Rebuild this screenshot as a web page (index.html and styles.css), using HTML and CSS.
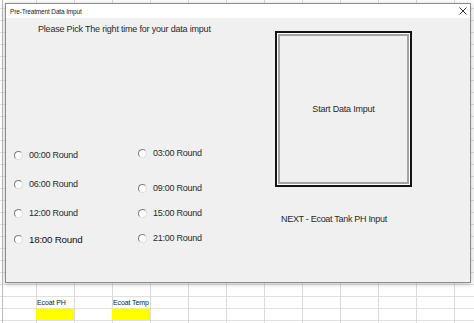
FILE: index.html
```html
<!DOCTYPE html>
<html lang="en">
<head>
  <meta charset="UTF-8">
  <title>Pre-Treatment Data Imput</title>
  <link rel="stylesheet" href="styles.css">
</head>
<body>

  <div class="sheet">
    <div class="sheet-cells">
      <div class="cell label col-ph">Ecoat PH</div>
      <div class="cell label col-temp">Ecoat Temp</div>
      <div class="cell fill col-ph"></div>
      <div class="cell fill col-temp"></div>
    </div>
  </div>

  <div class="dialog">
    <div class="titlebar">
      <span class="title">Pre-Treatment Data Imput</span>
      <svg class="close" width="8" height="8" viewBox="0 0 8 8">
        <path d="M0.5 0.5 L7.5 7.5 M7.5 0.5 L0.5 7.5" stroke="#333" stroke-width="1" fill="none"/>
      </svg>
    </div>

    <div class="dialog-body">
      <div class="left">
        <p class="prompt">Please Pick The right time for your data imput</p>

        <div class="rounds">
          <div class="round-col first">
            <label class="round"><span class="dot"></span>00:00 Round</label>
            <label class="round"><span class="dot"></span>06:00 Round</label>
            <label class="round"><span class="dot"></span>12:00 Round</label>
            <label class="round big"><span class="dot"></span>18:00 Round</label>
          </div>
          <div class="round-col second">
            <label class="round"><span class="dot"></span>03:00 Round</label>
            <label class="round"><span class="dot"></span>09:00 Round</label>
            <label class="round"><span class="dot"></span>15:00 Round</label>
            <label class="round"><span class="dot"></span>21:00 Round</label>
          </div>
        </div>
      </div>

      <div class="right">
        <button class="start">Start Data Imput</button>
        <p class="next">NEXT - Ecoat Tank PH Input</p>
      </div>
    </div>
  </div>

</body>
</html>
```

FILE: styles.css
```css
body, html {
  margin: 0;
  padding: 0;
  width: 100%;
  height: 100%;
  overflow: hidden;
  background-color: #ffffff;
  font-family: "Liberation Sans", Arial, sans-serif;
}

/* spreadsheet behind the form */
.sheet {
  position: relative;
  height: 323px;
  display: flex;
  flex-direction: column;
  justify-content: flex-end;
  padding-bottom: 3px;
  box-sizing: border-box;
  background-image:
    linear-gradient(to right, #bdbdbd 1px, transparent 1px),
    linear-gradient(to right, #dadada 1px, transparent 1px),
    linear-gradient(to bottom, #e0e0e0 1px, transparent 1px);
  background-size: 100% 100%, 38px 100%, 100% 12px;
  background-position: 2px 0, 36px 0, 0 8px;
  background-repeat: no-repeat, repeat, repeat;
}

.sheet-cells {
  display: grid;
  grid-template-columns: 36px repeat(12, 38px);
  grid-template-rows: 12px 12px;
}

.cell.col-ph { grid-column: 2; }
.cell.col-temp { grid-column: 4; }

.cell.label {
  grid-row: 1;
  font-size: 7px;
  letter-spacing: -0.1px;
  line-height: 12px;
  padding: 1px 0 0 1px;
  white-space: nowrap;
  color: #222;
}

.cell.fill {
  grid-row: 2;
  margin: 1px 0 0 0;
  background-color: #ffff00;
}

/* the form window */
.dialog {
  position: absolute;
  top: 3px;
  left: 5px;
  width: 466px;
  height: 280px;
  box-sizing: border-box;
  border: 1px solid #8c8c8c;
  background-color: #f0f0f0;
  box-shadow: 0 1px 5px rgba(0, 0, 0, 0.25);
  display: flex;
  flex-direction: column;
}

.titlebar {
  height: 14px;
  background-color: #ffffff;
  display: flex;
  align-items: center;
  justify-content: space-between;
  padding: 0 3px 0 4px;
}

.title {
  font-size: 6.5px;
  letter-spacing: -0.15px;
  color: #222;
}

.dialog-body {
  flex: 1;
  display: flex;
  color: #2a2a2a;
}

.left {
  width: 269px;
  padding: 5px 0 0 8px;
  box-sizing: border-box;
}

.prompt {
  margin: 0 0 0 24px;
  font-size: 9px;
  letter-spacing: -0.2px;
  line-height: 12px;
}

.rounds {
  display: flex;
  margin-top: 112px;
}

.round-col {
  display: flex;
  flex-direction: column;
}

.round-col.first {
  width: 124px;
  padding-top: 2px;
  gap: 17px;
}

.round-col.first .round.big {
  margin-top: -3px;
}

.round-col.second .round:nth-child(2) {
  margin-top: 23px;
}

.round-col.second .round:nth-child(3),
.round-col.second .round:nth-child(4) {
  margin-top: 13px;
}

.round {
  display: flex;
  align-items: center;
  gap: 6px;
  height: 12px;
  font-size: 9px;
  letter-spacing: -0.25px;
  color: #2a2a2a;
}

.round.big {
  font-size: 9.8px;
  color: #111;
}

.dot {
  width: 7px;
  height: 7px;
  border-radius: 50%;
  border: 1px solid;
  border-color: #7a7a7a #dcdcdc #dcdcdc #7a7a7a;
  background-color: #ffffff;
}

.right {
  padding-top: 13px;
}

.start {
  display: flex;
  align-items: center;
  justify-content: center;
  width: 137px;
  height: 156px;
  padding: 0;
  margin: 0;
  border: 2px solid #141414;
  background-color: #f0f0f0;
  box-shadow: inset 0 0 0 1px #ffffff, inset 0 0 0 3px #a3a3a3;
  font-family: inherit;
  font-size: 9px;
  letter-spacing: -0.2px;
  color: #2a2a2a;
}

.next {
  margin: 26px 0 0 6px;
  font-size: 9px;
  letter-spacing: -0.3px;
  line-height: 12px;
}
```
